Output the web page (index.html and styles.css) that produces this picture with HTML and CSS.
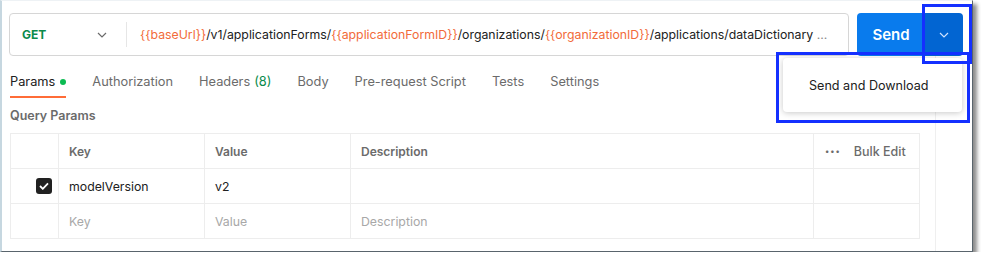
FILE: index.html
```html
<!DOCTYPE html>
<html lang="en">
<head>
  <meta charset="UTF-8">
  <meta name="viewport" content="width=device-width, initial-scale=1.0">
  <title>Request - Params</title>
  <link rel="stylesheet" href="styles.css">
</head>
<body>
  <div class="window">
    <div class="request-bar">
      <div class="url-box">
        <div class="method">
          <span class="method-name">GET</span>
          <svg class="chevron" width="10" height="6" viewBox="0 0 10 6"><path d="M1 1l4 4 4-4" fill="none" stroke="#6b6b6b" stroke-width="1.2"/></svg>
        </div>
        <div class="url-text"><span class="var">{{baseUrl}}</span>/v1/applicationForms/<span class="var">{{applicationFormID}}</span>/organizations/<span class="var">{{organizationID}}</span>/applications/dataDictionary <span class="dots">...</span></div>
      </div>
      <div class="send-group">
        <button class="send-button">Send</button>
        <button class="send-more">
          <svg width="10" height="6" viewBox="0 0 10 6"><path d="M1 1l4 4 4-4" fill="none" stroke="#cfe3ff" stroke-width="1.2"/></svg>
        </button>
      </div>
    </div>

    <div class="lower">
      <div class="main-panel">
        <nav class="tabs">
          <a class="tab active">Params <span class="dot"></span></a>
          <a class="tab">Authorization</a>
          <a class="tab">Headers <span class="count">(8)</span></a>
          <a class="tab">Body</a>
          <a class="tab">Pre-request Script</a>
          <a class="tab">Tests</a>
          <a class="tab">Settings</a>
        </nav>

        <div class="section-title">Query Params</div>

        <table class="params-table">
          <thead>
            <tr>
              <th class="col-check"></th>
              <th class="col-key">Key</th>
              <th class="col-value">Value</th>
              <th class="col-desc">Description</th>
              <th class="col-bulk"><span class="more">•••</span>Bulk Edit</th>
            </tr>
          </thead>
          <tbody>
            <tr>
              <td class="col-check"><span class="checkbox"><svg width="10" height="8" viewBox="0 0 10 8"><path d="M1 4l2.8 2.8L9 1.3" fill="none" stroke="#fff" stroke-width="1.8"/></svg></span></td>
              <td>modelVersion</td>
              <td>v2</td>
              <td></td>
              <td></td>
            </tr>
            <tr class="placeholder">
              <td class="col-check"></td>
              <td>Key</td>
              <td>Value</td>
              <td>Description</td>
              <td></td>
            </tr>
          </tbody>
        </table>
      </div>
      <div class="side-panel"></div>
    </div>

    <!-- menu opened from the send arrow -->
    <div class="send-menu">Send and Download</div>

    <!-- highlight boxes drawn over the capture -->
    <div class="mark mark-arrow"></div>
    <div class="mark mark-menu"></div>
  </div>
</body>
</html>
```

FILE: styles.css
```css
body {
  margin: 0;
  padding: 0;
  background-color: white;
  font-family: Inter, "Noto Sans", Arial, sans-serif;
  font-size: 12.5px;
  color: #212121;
}

.window {
  position: relative;
  width: 973px;
  height: 252px;
  background-color: white;
  border-top: 1px solid #eef2f5;
  border-left: 2px solid #c6d7e0;
  border-right: 1px solid #59646c;
  border-bottom: 1px solid #59646c;
  box-shadow: 4px 4px 4px rgba(0, 0, 0, 0.45);
  box-sizing: border-box;
  display: flex;
  flex-direction: column;
}

.request-bar {
  display: flex;
  gap: 8px;
  margin-top: 12px;
  padding-left: 7px;
}

.url-box {
  display: flex;
  align-items: center;
  width: 840px;
  height: 43px;
  border: 1px solid #d6d6d6;
  border-radius: 4px;
  box-sizing: border-box;
  overflow: hidden;
}

.method {
  display: flex;
  align-items: center;
  justify-content: space-between;
  flex-shrink: 0;
  width: 117px;
  height: 25px;
  padding: 0 19px 0 12px;
  box-sizing: border-box;
  border-right: 1px solid #e6e6e6;
}

.method-name {
  color: #0b8a4c;
  font-weight: 700;
  font-size: 12px;
}

.url-text {
  padding-left: 13px;
  white-space: nowrap;
  overflow: hidden;
  font-size: 12.3px;
  color: #212121;
}

.url-text .var {
  color: #f26b3a;
}

.url-text .dots {
  color: #8a8a8a;
}

.send-group {
  display: flex;
  width: 106px;
  height: 43px;
}

.send-button {
  width: 68px;
  border: none;
  background-color: #097bed;
  color: white;
  font-family: inherit;
  font-size: 15px;
  font-weight: 600;
  border-radius: 4px 0 0 4px;
  padding: 0;
}

.send-more {
  width: 38px;
  border: none;
  background-color: #0265d2;
  border-radius: 0 4px 4px 0;
  padding: 0;
  display: flex;
  align-items: center;
  justify-content: center;
}

.lower {
  display: flex;
  flex: 1;
}

.main-panel {
  width: 934px;
  padding-left: 8px;
  box-sizing: border-box;
  border-right: 1px solid #efefef;
}

.side-panel {
  flex: 1;
}

.tabs {
  display: flex;
  gap: 26px;
  margin-top: 10px;
}

.tab {
  display: flex;
  align-items: center;
  line-height: 16px;
  padding: 8px 0 6px;
  border-bottom: 2px solid transparent;
  color: #6b6b6b;
  font-size: 12.8px;
}

.tab.active {
  color: #212121;
  border-bottom-color: #ff6c37;
}

.tab .dot {
  width: 6px;
  height: 6px;
  border-radius: 50%;
  background-color: #0cbb52;
  margin-left: 5px;
}

.tab .count {
  color: #0b8a4c;
  margin-left: 4px;
}

.section-title {
  margin-top: 10px;
  line-height: 16px;
  font-size: 12.5px;
  font-weight: 600;
  color: #6b6b6b;
}

.params-table {
  margin-top: 9px;
  border-collapse: collapse;
  table-layout: fixed;
  width: 909px;
}

.params-table th,
.params-table td {
  border: 1px solid #ededed;
  height: 35px;
  box-sizing: border-box;
  padding: 0 10px;
  text-align: left;
  white-space: nowrap;
}

.params-table th {
  font-size: 12px;
  font-weight: 600;
  color: #6b6b6b;
}

.params-table td {
  font-size: 12.3px;
  color: #212121;
}

.params-table .placeholder td {
  color: #a8a8a8;
}

.col-check {
  width: 48px;
}

.col-key {
  width: 146px;
}

.col-value {
  width: 146px;
}

.col-desc {
  width: 463px;
}

.col-bulk {
  width: 106px;
}

.params-table th.col-bulk {
  padding-left: 11px;
  font-weight: 500;
  font-size: 12.5px;
}

.more {
  font-size: 8px;
  letter-spacing: 1px;
  color: #6b6b6b;
  margin-right: 13px;
  vertical-align: 2px;
}

.params-table td.col-check {
  padding: 0 6px 0 0;
  text-align: right;
}

.checkbox {
  display: inline-flex;
  align-items: center;
  justify-content: center;
  width: 16px;
  height: 16px;
  border-radius: 3px;
  background-color: #212121;
  vertical-align: middle;
}

.send-menu {
  position: absolute;
  left: 781px;
  top: 57px;
  width: 179px;
  height: 54px;
  display: flex;
  align-items: center;
  padding-left: 26px;
  box-sizing: border-box;
  background-color: white;
  border-radius: 4px;
  box-shadow: 0 1px 6px rgba(0, 0, 0, 0.22);
  font-size: 12.6px;
  color: #212121;
}

.mark {
  position: absolute;
  border: 3px solid #1430ff;
  box-sizing: border-box;
}

.mark-arrow {
  left: 920px;
  top: 3px;
  width: 50px;
  height: 60px;
}

.mark-menu {
  left: 774px;
  top: 51px;
  width: 194px;
  height: 71px;
}
```
